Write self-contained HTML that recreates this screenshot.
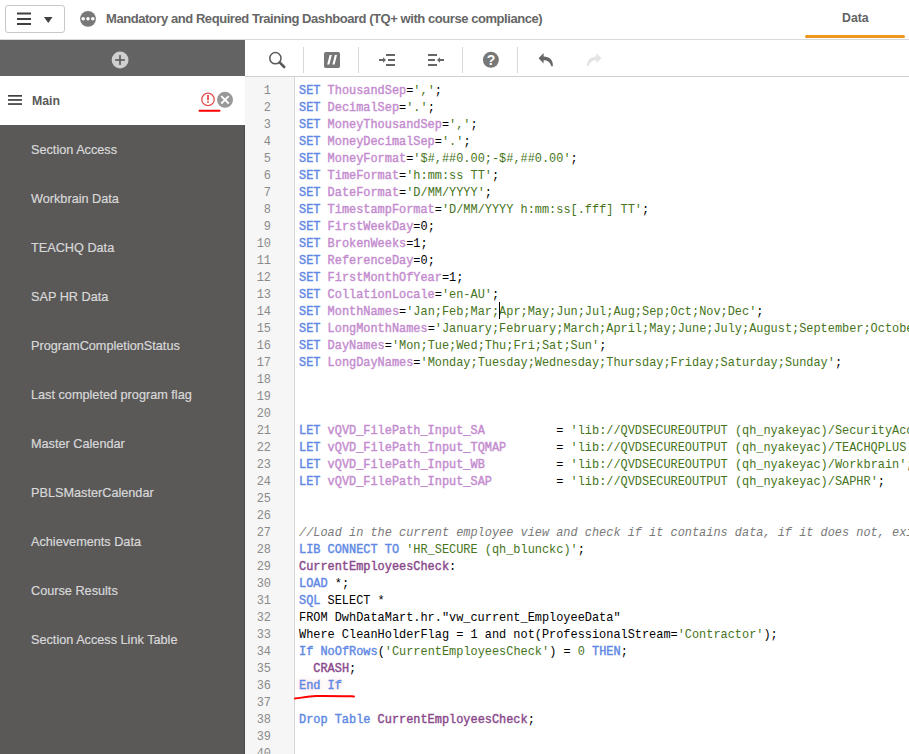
<!DOCTYPE html>
<html><head><meta charset="utf-8">
<style>
*{box-sizing:border-box}
html,body{margin:0;padding:0}
body{width:909px;height:754px;overflow:hidden;position:relative;background:#fff;font-family:"Liberation Sans",sans-serif}
.abs{position:absolute}
#hdr{left:0;top:0;width:909px;height:40px;background:#fff;border-bottom:1px solid #d9d9d9}
#menubtn{left:5px;top:5px;width:60px;height:28px;border:1px solid #c8c8c8;border-radius:3px;background:#fff}
#title{left:106px;top:11px;font-weight:bold;font-size:13px;color:#666;white-space:nowrap;letter-spacing:-0.44px}
#tab{left:842px;top:11px;font-weight:bold;font-size:12.3px;color:#636363}
#tabline{left:805px;top:35px;width:100px;height:3px;background:#f0961e;border-radius:2px}
#side{left:0;top:40px;width:245px;height:714px;background:#5a5958;box-shadow:inset -1px 0 0 #4a4a4a}
#sidetop{left:0;top:40px;width:245px;height:36px;background:#636363}
#main{left:0;top:76px;width:245px;height:49px;background:#fff}
.item{position:absolute;left:31px;font-size:12.7px;color:#d8d8d8;white-space:nowrap;-webkit-text-stroke:0.2px #d8d8d8}
#tb{left:245px;top:40px;width:664px;height:37px;background:#fff;border-bottom:1px solid #cfcfcf}
.sep{position:absolute;top:47px;width:1px;height:26px;background:#d9d9d9}
#gutter{left:245px;top:77px;width:50px;height:677px;background:#f6f6f6;border-right:1px solid #d6d6d6}
#code{left:299px;top:83px;font-family:"Liberation Mono",monospace;font-size:11.92px;line-height:17px;white-space:pre;color:#000}
#nums{left:245px;top:83px;width:26px;text-align:right;font-family:"Liberation Mono",monospace;font-size:11.92px;line-height:17px;white-space:pre;color:#8a8a8a}
.k{color:#6088e4;-webkit-text-stroke:0.4px #6088e4}
.v{color:#c48ccf;-webkit-text-stroke:0.4px #c48ccf}
.s{color:#467421}
.t{color:#8a4a8c;-webkit-text-stroke:0.4px #8a4a8c}
.c{color:#7a7a7a;font-style:italic}
</style></head><body>
<div id="hdr" class="abs"></div>
<div id="menubtn" class="abs"></div>
<svg class="abs" style="left:0;top:0" width="909" height="40" viewBox="0 0 909 40">
<rect x="17" y="12.5" width="14" height="2" fill="#404040"/>
<rect x="17" y="18" width="14" height="2" fill="#404040"/>
<rect x="17" y="23" width="14" height="2" fill="#404040"/>
<path d="M44 17 L52.5 17 L48.25 23 Z" fill="#404040"/>
<circle cx="88" cy="18.8" r="7.9" fill="#787878"/>
<circle cx="83.2" cy="18.8" r="1.7" fill="#fff"/>
<circle cx="88" cy="18.8" r="1.7" fill="#fff"/>
<circle cx="92.8" cy="18.8" r="1.7" fill="#fff"/>
</svg>
<div id="title" class="abs">Mandatory and Required Training Dashboard (TQ+ with course compliance)</div>
<div id="tab" class="abs">Data</div>
<div id="tabline" class="abs"></div>

<div id="side" class="abs"></div>
<div id="sidetop" class="abs"></div>
<div id="main" class="abs"></div>
<svg class="abs" style="left:0;top:40px" width="245" height="85" viewBox="0 40 245 85">
<circle cx="120.1" cy="60" r="8.4" fill="#cfcfcf"/>
<rect x="115.1" y="59.2" width="9.8" height="1.6" fill="#5a5a5a"/>
<rect x="119.2" y="55.1" width="1.6" height="9.8" fill="#5a5a5a"/>
<rect x="8" y="95" width="14" height="1.7" fill="#404040"/>
<rect x="8" y="99.1" width="14" height="1.7" fill="#404040"/>
<rect x="8" y="103.2" width="14" height="1.7" fill="#404040"/>
<circle cx="208" cy="99.4" r="6.2" fill="none" stroke="#e05050" stroke-width="1.3"/>
<rect x="207.1" y="95" width="1.8" height="5.2" fill="#e05050"/>
<rect x="207.1" y="101.3" width="1.8" height="1.6" fill="#e05050"/>
<circle cx="225" cy="99.8" r="8" fill="#999"/>
<path d="M221.3 96.1 L228.7 103.5 M228.7 96.1 L221.3 103.5" stroke="#fff" stroke-width="1.8"/>
<path d="M199.5 110.7 L219.5 110.7" stroke="#ff0000" stroke-width="2" stroke-linecap="round"/>
</svg>
<div class="abs" style="left:32px;top:94px;font-weight:bold;font-size:12.3px;color:#595959">Main</div>
<div class="item" style="top:143px">Section Access</div>
<div class="item" style="top:192px">Workbrain Data</div>
<div class="item" style="top:241px">TEACHQ Data</div>
<div class="item" style="top:290px">SAP HR Data</div>
<div class="item" style="top:339px">ProgramCompletionStatus</div>
<div class="item" style="top:388px">Last completed program flag</div>
<div class="item" style="top:437px">Master Calendar</div>
<div class="item" style="top:486px">PBLSMasterCalendar</div>
<div class="item" style="top:535px">Achievements Data</div>
<div class="item" style="top:584px">Course Results</div>
<div class="item" style="top:633px">Section Access Link Table</div>

<div id="tb" class="abs"></div>
<div class="sep" style="left:303px"></div>
<div class="sep" style="left:358px"></div>
<div class="sep" style="left:462px"></div>
<div class="sep" style="left:517px"></div>
<svg class="abs" style="left:245px;top:40px" width="664" height="36" viewBox="245 40 664 36">
<circle cx="275.4" cy="58.2" r="5.6" fill="none" stroke="#595959" stroke-width="1.5"/>
<path d="M279.6 62.4 L284.2 67" stroke="#595959" stroke-width="2.6" stroke-linecap="round"/>
<rect x="324" y="52" width="16" height="16" rx="1.8" fill="#777"/>
<path d="M327.2 64.6 L329.6 54.9 L331.8 54.9 L329.4 64.6 Z M332.4 64.6 L334.8 54.9 L337 54.9 L334.6 64.6 Z" fill="#fff"/>
<rect x="386" y="54" width="9" height="2" fill="#666"/>
<rect x="388" y="59" width="7" height="2" fill="#666"/>
<rect x="386" y="64" width="9" height="2" fill="#666"/>
<rect x="379" y="59" width="4.5" height="2" fill="#666"/>
<path d="M383 57.2 L386 60 L383 62.8 Z" fill="#666"/>
<rect x="428" y="54" width="9" height="2" fill="#666"/>
<rect x="428" y="59" width="7" height="2" fill="#666"/>
<rect x="428" y="64" width="9" height="2" fill="#666"/>
<rect x="439.5" y="59" width="4.5" height="2" fill="#666"/>
<path d="M440 57.2 L437 60 L440 62.8 Z" fill="#666"/>
<circle cx="490.9" cy="59.8" r="8" fill="#777"/>
<text x="491" y="64.8" text-anchor="middle" font-family="Liberation Sans" font-weight="bold" font-size="14" fill="#fff">?</text>
<path d="M543.6 53 L538.6 58.3 L543.6 63.5 L543.6 60.2 C547.3 60.2 550.2 62 551.3 66.3 L552.9 66.3 C553.3 60.3 549.6 56.6 543.6 56.6 Z" fill="#666"/>
<path d="M596.4 53 L601.4 58.3 L596.4 63.5 L596.4 60.2 C592.7 60.2 589.8 62 588.7 66.3 L587.1 66.3 C586.7 60.3 590.4 56.6 596.4 56.6 Z" fill="#e4e4e4"/>
</svg>

<div id="gutter" class="abs"></div>
<div id="nums" class="abs">1
2
3
4
5
6
7
8
9
10
11
12
13
14
15
16
17
18
19
20
21
22
23
24
25
26
27
28
29
30
31
32
33
34
35
36
37
38
39
40</div>
<div id="code" class="abs"><span class="k">SET</span> <span class="v">ThousandSep</span>=<span class="s">','</span>;
<span class="k">SET</span> <span class="v">DecimalSep</span>=<span class="s">'.'</span>;
<span class="k">SET</span> <span class="v">MoneyThousandSep</span>=<span class="s">','</span>;
<span class="k">SET</span> <span class="v">MoneyDecimalSep</span>=<span class="s">'.'</span>;
<span class="k">SET</span> <span class="v">MoneyFormat</span>=<span class="s">'$#,##0.00;-$#,##0.00'</span>;
<span class="k">SET</span> <span class="v">TimeFormat</span>=<span class="s">'h:mm:ss TT'</span>;
<span class="k">SET</span> <span class="v">DateFormat</span>=<span class="s">'D/MM/YYYY'</span>;
<span class="k">SET</span> <span class="v">TimestampFormat</span>=<span class="s">'D/MM/YYYY h:mm:ss[.fff] TT'</span>;
<span class="k">SET</span> <span class="v">FirstWeekDay</span>=0;
<span class="k">SET</span> <span class="v">BrokenWeeks</span>=1;
<span class="k">SET</span> <span class="v">ReferenceDay</span>=0;
<span class="k">SET</span> <span class="v">FirstMonthOfYear</span>=1;
<span class="k">SET</span> <span class="v">CollationLocale</span>=<span class="s">'en-AU'</span>;
<span class="k">SET</span> <span class="v">MonthNames</span>=<span class="s">'Jan;Feb;Mar;Apr;May;Jun;Jul;Aug;Sep;Oct;Nov;Dec'</span>;
<span class="k">SET</span> <span class="v">LongMonthNames</span>=<span class="s">'January;February;March;April;May;June;July;August;September;October;November;December'</span>;
<span class="k">SET</span> <span class="v">DayNames</span>=<span class="s">'Mon;Tue;Wed;Thu;Fri;Sat;Sun'</span>;
<span class="k">SET</span> <span class="v">LongDayNames</span>=<span class="s">'Monday;Tuesday;Wednesday;Thursday;Friday;Saturday;Sunday'</span>;



<span class="k">LET</span> <span class="v">vQVD_FilePath_Input_SA</span>          = <span class="s">'lib://QVDSECUREOUTPUT (qh_nyakeyac)/SecurityAccess.qvd'</span>;
<span class="k">LET</span> <span class="v">vQVD_FilePath_Input_TQMAP</span>       = <span class="s">'lib://QVDSECUREOUTPUT (qh_nyakeyac)/TEACHQPLUS Mapping.qvd'</span>;
<span class="k">LET</span> <span class="v">vQVD_FilePath_Input_WB</span>          = <span class="s">'lib://QVDSECUREOUTPUT (qh_nyakeyac)/Workbrain'</span>;
<span class="k">LET</span> <span class="v">vQVD_FilePath_Input_SAP</span>         = <span class="s">'lib://QVDSECUREOUTPUT (qh_nyakeyac)/SAPHR'</span>;


<span class="c">//Load in the current employee view and check if it contains data, if it does not, exit the script</span>
<span class="k">LIB CONNECT TO</span> <span class="s">'HR_SECURE (qh_blunckc)'</span>;
<span class="t">CurrentEmployeesCheck</span>:
<span class="k">LOAD</span> *;
<span class="k">SQL</span> SELECT *
FROM DwhDataMart.hr."vw_current_EmployeeData"
Where CleanHolderFlag = 1 and not(ProfessionalStream=<span class="s">'Contractor'</span>);
<span class="k">If</span> <span class="k">NoOfRows</span>(<span class="s">'CurrentEmployeesCheck'</span>) = <span class="s">0</span> <span class="k">THEN</span>;
  <span class="t">CRASH</span>;
<span class="k" style="text-shadow:0 0 6px rgba(255,90,90,0.45)">End If</span>

<span class="k">Drop Table</span> <span class="t">CurrentEmployeesCheck</span>;

</div>
<div class="abs" style="left:499px;top:302px;width:1px;height:17px;background:#000"></div>
<svg class="abs" style="left:290px;top:690px" width="70" height="12" viewBox="290 690 70 12">
<path d="M295 698.6 C303 697.5 309 696.2 316 696 C330 695.8 345 696.2 354 696.4" fill="none" stroke="#ff0000" stroke-width="2" stroke-linecap="round"/>
</svg>
</body></html>
